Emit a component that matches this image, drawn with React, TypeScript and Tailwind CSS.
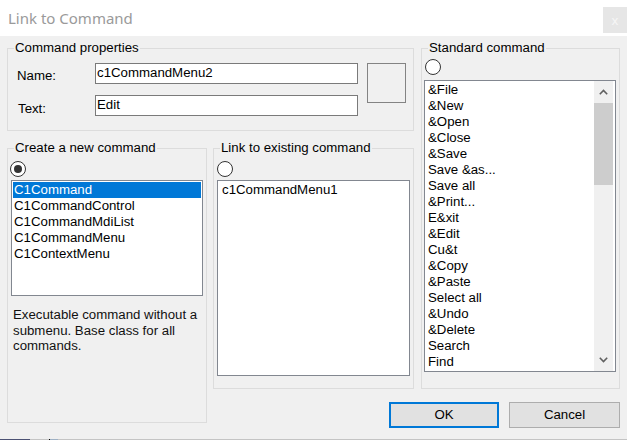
import React from "react";

const standardItems = [
  "&File",
  "&New",
  "&Open",
  "&Close",
  "&Save",
  "Save &as...",
  "Save all",
  "&Print...",
  "E&xit",
  "&Edit",
  "Cu&t",
  "&Copy",
  "&Paste",
  "Select all",
  "&Undo",
  "&Delete",
  "Search",
  "Find",
];

const newCommands = ["C1Command", "C1CommandControl", "C1CommandMdiList", "C1CommandMenu", "C1ContextMenu"];

function GroupBox({ title, className, children }: { title: string; className: string; children?: React.ReactNode }) {
  return (
    <div className={`relative border border-[#dcdcdc] ${className}`}>
      <span className="absolute left-[6px] -top-[9px] bg-[#f0f0f0] px-px leading-[16px] whitespace-nowrap">
        {title}
      </span>
      {children}
    </div>
  );
}

function Radio({ checked, className }: { checked?: boolean; className: string }) {
  return (
    <div
      className={`w-[16px] h-[16px] rounded-full border border-[#333333] bg-white flex items-center justify-center ${className}`}
    >
      {checked && <div className="w-[8px] h-[8px] rounded-full bg-[#333333]" />}
    </div>
  );
}

function Chevron({ up }: { up?: boolean }) {
  return (
    <svg width="9" height="6" viewBox="0 0 9 6">
      <path
        d={up ? "M0.8 5.2 L4.5 1.5 L8.2 5.2" : "M0.8 0.8 L4.5 4.5 L8.2 0.8"}
        fill="none"
        stroke="#606060"
        strokeWidth="1.6"
      />
    </svg>
  );
}

export default function App() {
  return (
    <div className="w-[627px] h-[440px] bg-[#f0f0f0] flex flex-col overflow-hidden text-[13.25px] text-black font-['Liberation_Sans',Arial,sans-serif]">
      {/* Title bar */}
      <div className="h-[36px] bg-white flex items-start justify-between shrink-0">
        <span className="pl-[8px] pt-[7px] text-[15px] leading-[22px] text-[#9a9a9a] font-['Noto_Sans',sans-serif]">
          Link to Command
        </span>
        <div className="mt-[7px] w-[24px] h-[26px] bg-[#e6e6e6] flex items-center justify-center text-[#f6f6f6] text-[13px] leading-none font-['Noto_Sans',sans-serif]">
          x
        </div>
      </div>

      {/* Dialog body */}
      <div className="pt-[12px] pl-[7px] grid grid-cols-[200px_6px_201px_7px_199px] grid-rows-[83px_17px_241px_13px_26px]">
        <GroupBox title="Command properties" className="col-start-1 col-span-3 row-start-1 pt-[14px] pl-[9px] flex">
          <div className="flex flex-col gap-[11px]">
            <div className="flex">
              <span className="w-[78px] pt-[5px] leading-[16px]">Name:</span>
              <div className="w-[263px] h-[21px] border border-[#7a7a7a] bg-white pl-px pt-px leading-[16px]">
                c1CommandMenu2
              </div>
            </div>
            <div className="flex">
              <span className="w-[78px] pl-px pt-[6px] leading-[16px]">Text:</span>
              <div className="w-[263px] h-[21px] border border-[#7a7a7a] bg-white pl-px pt-px leading-[16px]">
                Edit
              </div>
            </div>
          </div>
          <div className="ml-[9px] w-[39px] h-[40px] border border-[#838383]" />
        </GroupBox>

        <GroupBox title="Standard command" className="col-start-5 row-start-1 row-span-3 flex flex-col">
          <Radio className="ml-[3px] mt-[10px]" />
          <div className="ml-[2px] mt-[5px] w-[192px] h-[292px] border border-[#828790] bg-white flex">
            <div className="flex-1 pt-px pl-[3px]">
              {standardItems.map((item) => (
                <div key={item} className="h-[16px] leading-[16px] whitespace-nowrap">
                  {item}
                </div>
              ))}
            </div>
            <div className="w-[19px] mr-[2px] bg-[#f0f0f0] flex flex-col items-center">
              <div className="h-[21px] w-full flex items-center justify-center pt-px">
                <Chevron up />
              </div>
              <div className="mt-px w-full h-[82px] bg-[#cdcdcd]" />
              <div className="mt-auto h-[21px] w-full flex items-center justify-center pb-[2px]">
                <Chevron />
              </div>
            </div>
          </div>
        </GroupBox>

        <GroupBox title="Create a new command" className="col-start-1 row-start-3 row-span-3 self-start h-[275px] flex flex-col">
          <Radio checked className="ml-[2px] mt-[12px]" />
          <div className="ml-[3px] mt-[3px] w-[192px] h-[116px] border border-[#828790] bg-white p-px">
            {newCommands.map((c, i) => (
              <div
                key={c}
                className={`h-[16px] leading-[16px] pl-px whitespace-nowrap ${i === 0 ? "bg-[#0078d7] text-white" : ""}`}
              >
                {c}
              </div>
            ))}
          </div>
          <p className="ml-[5px] mt-[11px] w-[190px] leading-[15.5px] text-[#111111]">
            Executable command without a submenu. Base class for all commands.
          </p>
        </GroupBox>

        <GroupBox title="Link to existing command" className="col-start-3 row-start-3 flex flex-col">
          <Radio className="ml-[3px] mt-[12px]" />
          <div className="ml-[3px] mt-[3px] w-[193px] h-[196px] border border-[#828790] bg-white p-px">
            <div className="h-[16px] leading-[16px] pl-[3px]">c1CommandMenu1</div>
          </div>
        </GroupBox>

        <div className="col-start-3 col-span-3 row-start-5 flex justify-end gap-[10px]">
          <button className="w-[110px] h-[26px] border-2 border-[#0078d7] bg-[#e1e1e1] leading-[16px]">OK</button>
          <button className="w-[111px] h-[26px] border border-[#adadad] bg-[#e1e1e1] leading-[16px]">Cancel</button>
        </div>
      </div>

      {/* Bottom edge */}
      <div className="mt-auto h-px flex shrink-0">
        <div className="w-[30px] bg-[#4b5173]" />
        <div className="w-[19px] bg-[#c4c4c4]" />
        <div className="w-px bg-black" />
        <div className="w-[8px] bg-[#9fb1c4]" />
        <div className="flex-1 bg-[#c4c4c4]" />
      </div>
    </div>
  );
}
